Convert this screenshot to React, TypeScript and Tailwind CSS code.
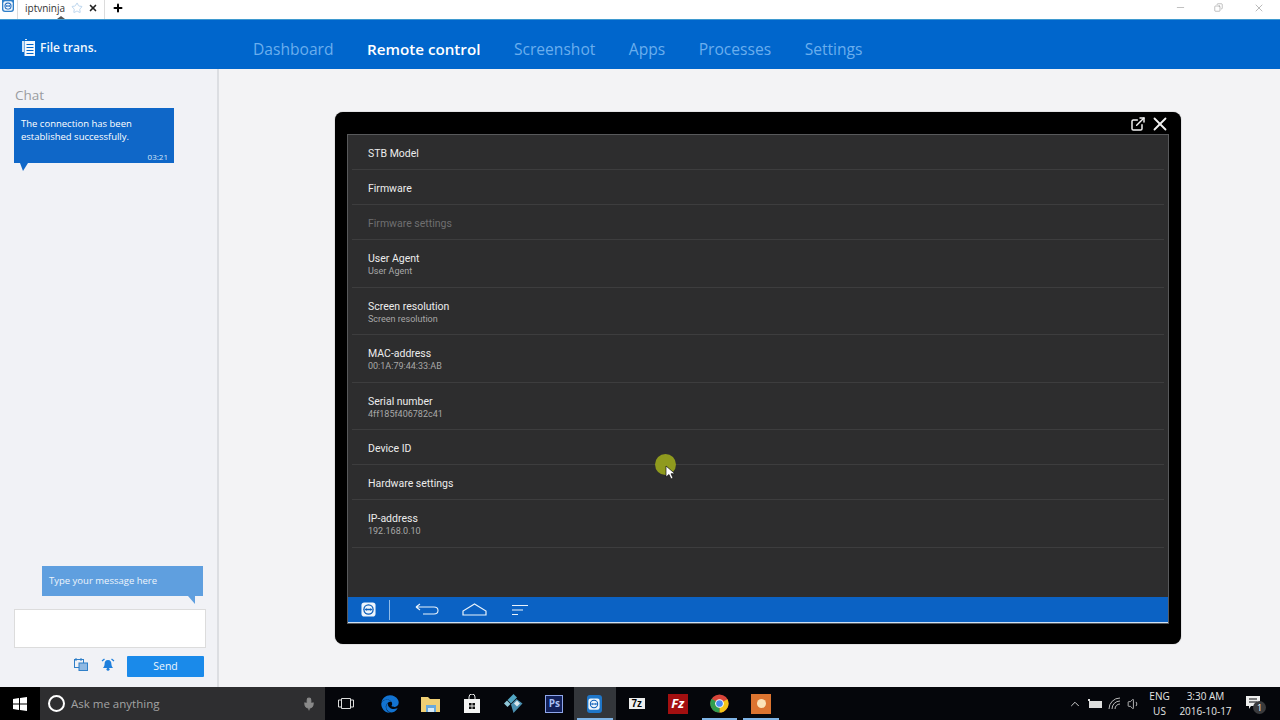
import { Mic, ChevronUp, Volume1, X, Star, Plus, Minus, Copy, ExternalLink } from "lucide-react";
import { FaEdge } from "react-icons/fa";

const navItems = ["Dashboard", "Remote control", "Screenshot", "Apps", "Processes", "Settings"];

const rows = [
  { title: "STB Model" },
  { title: "Firmware" },
  { title: "Firmware settings", disabled: true },
  { title: "User Agent", sub: "User Agent" },
  { title: "Screen resolution", sub: "Screen resolution" },
  { title: "MAC-address", sub: "00:1A:79:44:33:AB" },
  { title: "Serial number", sub: "4ff185f406782c41" },
  { title: "Device ID" },
  { title: "Hardware settings" },
  { title: "IP-address", sub: "192.168.0.10" },
];

function TvLogo({ size = 16 }: { size?: number }) {
  return (
    <svg width={size} height={size} viewBox="0 0 16 16">
      <rect x="0.5" y="0.5" width="15" height="15" rx="3" fill="#eef5fc" />
      <circle cx="8" cy="8" r="5.6" fill="#0a5cb8" />
      <circle cx="8" cy="8" r="4.2" fill="#eef5fc" />
      <path d="M3.8 8l2.2-1.7v1h4v-1L12.2 8 10 9.7v-1H6v1z" fill="#0a5cb8" />
    </svg>
  );
}

function TaskIcon({ children, active, open }: { children: React.ReactNode; active?: boolean; open?: boolean }) {
  return (
    <div className={`relative flex h-full w-[41.5px] items-center justify-center ${active ? "bg-[#33363b]" : ""}`}>
      {children}
      {(open || active) && <div className="absolute bottom-0 left-[3px] right-[3px] h-[2px] bg-[#7fb4e6]" />}
    </div>
  );
}

export default function App() {
  return (
    <div className="flex h-[720px] w-[1280px] flex-col overflow-hidden bg-white font-['Open_Sans',sans-serif]">
      {/* Tab strip */}
      <div className="flex h-[20px] shrink-0 items-center border-b border-[#3f9ad0] bg-white pb-[4px]">
        <div className="flex h-full w-[17px] items-start pl-[2px]">
          <div className="h-[12px] w-[12px] overflow-hidden rounded-b-[3px] bg-[#2f7fc8] p-[1px]">
            <TvLogo size={10} />
          </div>
        </div>
        <div className="relative -mb-[4px] flex h-[19px] w-[88px] items-center border-x border-[#dcdcdc] pb-[4px] pl-[7px]">
          <span className="w-[45px] text-[10px] leading-none text-[#333]">iptvninja</span>
          <Star size={12} className="ml-[1px] text-[#bcd6ee]" />
          <X size={10} strokeWidth={4} className="ml-[5px] text-[#222]" />
          <div className="absolute bottom-0 left-[39px] h-0 w-0 border-x-[4px] border-b-[3px] border-x-transparent border-b-[#555]" />
        </div>
        <Plus size={12} strokeWidth={4} className="ml-[7px] text-black" />
        <div className="ml-auto flex items-center text-[#777]">
          <Minus size={11} strokeWidth={1} className="mr-[28px]" />
          <Copy size={9} strokeWidth={1.2} className="mr-[30px] -scale-x-100" />
          <X size={12} strokeWidth={1} className="mr-[15px]" />
        </div>
      </div>

      {/* Header */}
      <div className="flex h-[49px] shrink-0 items-center bg-[#0066cc]">
        <div className="flex w-[253px] items-center pl-[22px] pt-[6px]">
          <svg width="14" height="17" viewBox="0 0 14 17" className="mr-[4px]">
            <path d="M0 2h2v11H0zM3 0h2v1H3z" fill="#cfe3f7" />
            <path d="M2.5 2H13v15H2.5z" fill="#f4f8fc" />
            <path d="M4.5 5h7v1h-7zM4.5 8h7v1h-7zM4.5 11h7v1h-7zM4.5 14h7v1h-7z" fill="#0066cc" />
          </svg>
          <span className="text-[12px] font-semibold text-[#f0f6fc]">File trans.</span>
        </div>
        <div className="flex gap-[33.5px] pt-[10px]">
          {navItems.map((item) => (
            <span
              key={item}
              className={
                item === "Remote control"
                  ? "text-[15.2px] font-semibold text-white"
                  : "text-[15.6px] text-[#6aaeee]"
              }
            >
              {item}
            </span>
          ))}
        </div>
      </div>

      {/* Main */}
      <div className="flex min-h-0 flex-1">
        <div className="flex w-[219px] shrink-0 flex-col border-r-2 border-[#dcdee2] bg-[#f1f2f6] pl-[14px]">
          <div className="mt-[16px] pl-[1px] text-[13.5px] leading-[20px] text-[#9a9ca0]">Chat</div>
          <div className="relative mt-[3px] flex h-[55px] w-[160px] flex-col bg-[#0f67c8] pl-[7px] pr-[6px] pt-[9px] text-white">
            <p className="text-[9.5px] leading-[13px]">
              The connection has been
              <br />
              established successfully.
            </p>
            <span className="mt-auto self-end pb-[1px] text-[8px] leading-[10px] text-[#d4e6f8]">03:21</span>
            <div className="absolute left-[6px] top-[55px] h-0 w-0 border-l-[3px] border-r-[5px] border-t-[8px] border-x-transparent border-t-[#0f67c8]" />
          </div>

          <div className="relative ml-[28px] mt-auto flex h-[30px] w-[161px] items-center bg-[#5f9fdf] pl-[7px] text-[9.5px] text-[#eef5fc]">
            Type your message here
            <div className="absolute right-[8px] top-[30px] h-0 w-0 border-l-[7px] border-t-[8px] border-l-transparent border-t-[#5f9fdf]" />
          </div>
          <div className="mt-[13px] h-[39px] w-[192px] border border-[#dcdcdc] bg-white" />
          <div className="mb-[10px] mt-[8px] flex h-[21px] items-center">
            <svg width="14" height="13" viewBox="0 0 14 13" className="ml-[60px] -mt-[4px]">
              <rect x="0.5" y="1.5" width="9" height="8" fill="none" stroke="#2f7fc8" />
              <path d="M2 0v3M7 0v3" stroke="#2f7fc8" />
              <rect x="5" y="5" width="8.5" height="7.5" fill="#8fb9e3" stroke="#2f7fc8" />
            </svg>
            <svg width="14" height="13" viewBox="0 0 14 13" className="ml-[13px] -mt-[4px]">
              <path d="M7 2c2.6 0 3.4 2 3.4 4s1 3 1.6 4H2c.6-1 1.6-2 1.6-4S4.400 2 7 2z" fill="#1f7fdc" />
              <circle cx="7" cy="11.300" r="1.500" fill="#1f7fdc" />
              <path d="M1 3l2.500-2M13 3l-2.500-2" stroke="#1f7fdc" strokeWidth="1.300" />
            </svg>
            <button className="ml-[12px] h-[21px] w-[77px] rounded-[1px] bg-[#1a8aea] text-[10.5px] text-[#eef6fd]">Send</button>
          </div>
        </div>

        <div className="relative flex-1 bg-[#f3f3f5] pl-[116px] pt-[43px]">
          {/* Device frame */}
          <div className="flex h-[532px] w-[846px] flex-col rounded-[8px] bg-black px-[12px] pb-[20px] pt-[22px] shadow-[0_0_1px_#555]">
            <div className="relative flex flex-1 flex-col border border-[#58595b] bg-[#2d2d2e] font-['Roboto',sans-serif]">
              <div className="absolute -top-[22px] -right-[3px] flex h-[22px] items-center gap-[3px] text-[#f2f2f2]">
                <ExternalLink size={16} strokeWidth={2.2} />
                <X size={22} strokeWidth={2} />
              </div>
              <div className="flex-1">
                {rows.map((row) => (
                  <div
                    key={row.title}
                    className={`ml-[4px] mr-[4px] flex flex-col justify-center border-b border-[#3d3d3e] pl-[16px] ${
                      row.sub ? "h-[47.5px] pt-[4px]" : "h-[35px] pt-[2px]"
                    }`}
                  >
                    <div className={`text-[10.5px] leading-[13px] ${row.disabled ? "text-[#6f6f70]" : "text-[#ececec]"}`}>
                      {row.title}
                    </div>
                    {row.sub && <div className="text-[9px] leading-[13px] text-[#a8a8a8]">{row.sub}</div>}
                  </div>
                ))}
              </div>
              {/* Device nav bar */}
              <div className="flex h-[25px] shrink-0 items-center bg-[#0b62c4] pl-[13px]">
                <TvLogo size={15} />
                <div className="ml-[13px] h-[20px] w-px bg-[#8fbbe8]" />
                <svg width="24" height="14" viewBox="0 0 24 14" fill="none" stroke="#eaf3fb" strokeWidth="1.100" className="ml-[25px]">
                  <path d="M1 4h18c3 0 4 1.500 4 3.500S22 11 19 11H8M1 4l4-3M1 4l4 3" />
                </svg>
                <svg width="25" height="13" viewBox="0 0 25 13" fill="none" stroke="#eaf3fb" strokeWidth="1.200" className="ml-[23px]">
                  <path d="M1 12V8L12.500 1 24 8v4z" />
                </svg>
                <svg width="18" height="12" viewBox="0 0 18 12" fill="none" stroke="#eaf3fb" strokeWidth="1.200" className="ml-[24px]">
                  <path d="M1 1.500h16M1 6h11M1 10.500h6" />
                </svg>
              </div>
              <div className="h-[1px] shrink-0 bg-[#cfe2f5]" />
            </div>
          </div>

          {/* Mouse pointer highlight */}
          <div className="absolute left-[436px] top-[385px] h-[21px] w-[21px] rounded-full bg-[#8f9a1e]" />
          <svg width="11" height="15" viewBox="0 0 11 15" className="absolute left-[446px] top-[396px]">
            <path d="M1 1v11l3-2.500 2 4.500 2-1-2-4.300h4z" fill="#fff" stroke="#111" strokeWidth="0.700" />
          </svg>
        </div>
      </div>

      {/* Taskbar */}
      <div className="flex h-[33px] shrink-0 items-center bg-[#05060b] font-['Open_Sans',sans-serif]">
        <div className="flex h-full w-[40px] items-center justify-center bg-black">
          <svg width="14" height="14" viewBox="0 0 14 14" fill="#fff">
            <path d="M0 2l6-.9v5.500H0zM7 1l7-1v6.600H7zM0 7.400h6v5.500L0 12zM7 7.400h7V14l-7-1z" />
          </svg>
        </div>
        <div className="flex h-full w-[285px] items-center bg-[#2e2e30] pl-[8px] pr-[9px]">
          <div className="h-[17px] w-[17px] rounded-full border-2 border-white" />
          <span className="ml-[6px] text-[11.5px] text-[#a3a3a3]">Ask me anything</span>
          <Mic size={14} className="ml-auto fill-[#8a8a8a] text-[#8a8a8a]" />
        </div>
        <div className="flex h-full">
          <TaskIcon>
            <svg width="16" height="13" viewBox="0 0 16 13" fill="none" stroke="#ddd" strokeWidth="1">
              <path d="M3.500 1.500h9v10h-9zM3.500 3H.5v7h3M12.500 3h3v7h-3" />
            </svg>
          </TaskIcon>
          <TaskIcon>
            <FaEdge size={18} className="ml-[5px] text-[#1273d2]" />
          </TaskIcon>
          <TaskIcon>
            <svg width="19" height="16" viewBox="0 0 19 16" className="ml-[4px]">
              <path d="M0 1h7l2 2h10v13H0z" fill="#f0cf74" />
              <path d="M5 9h10v7H5z" fill="#69a9dc" />
              <path d="M7 12h6v4H7z" fill="#d6e9f7" />
            </svg>
          </TaskIcon>
          <TaskIcon>
            <svg width="18" height="19" viewBox="0 0 18 19" className="ml-[4px]">
              <path d="M6 5V3a3 3 0 016 0v2" fill="none" stroke="#eee" strokeWidth="1" />
              <path d="M1 5h16v14H1z" fill="#f4f4f4" />
              <path d="M6 9h2.600v2.600H6zM9.400 9H12v2.600H9.400zM6 12.400h2.600V15H6zM9.400 12.400H12V15H9.400z" fill="#111" />
            </svg>
          </TaskIcon>
          <TaskIcon>
            <svg width="19" height="19" viewBox="0 0 19 19" className="ml-[4px]">
              <path d="M9.500 0l3.500 3.500-6 6-3.500-3.500z" fill="#52a7c4" />
              <path d="M3 6.500L6.500 10 3.500 13 0 9.500z" fill="#8fc7d8" />
              <path d="M7 10.500l5.500-5.500 6 4.500-9 9.500z" fill="#4a8fb0" />
              <path d="M10 9.500l3-3 3 3-3 3z" fill="#d8e6ec" />
            </svg>
          </TaskIcon>
          <TaskIcon>
            <div className="ml-[2px] flex h-[18px] w-[18px] items-center justify-center border border-[#8fa6ea] bg-[#12205a] text-[10px] font-bold text-[#a9c0f5]">
              Ps
            </div>
          </TaskIcon>
          <TaskIcon active>
            <div className="-ml-[1px] flex h-[18px] w-[15px] items-center justify-center rounded-[3px] bg-[#1f76c8]">
              <TvLogo size={12} />
            </div>
          </TaskIcon>
          <TaskIcon>
            <div className="ml-[1px] flex h-[11px] w-[16px] items-center justify-center bg-[#ededed] font-['Liberation_Sans',sans-serif] text-[10px] font-bold leading-none text-black">
              7z
            </div>
          </TaskIcon>
          <TaskIcon>
            <div className="flex h-[20px] w-[20px] items-center justify-center bg-[#a30f10] text-[13px] font-bold italic leading-none text-white">
              Fz
            </div>
          </TaskIcon>
          <TaskIcon open>
            <svg width="19" height="19" viewBox="0 0 48 48">
              <circle cx="24" cy="24" r="23" fill="#d9453a" />
              <path d="M24 24l20-11A23 23 0 0124 47z" fill="#f5c518" />
              <path d="M24 24L4 36A23 23 0 0024 47z" fill="#2f9e4f" />
              <path d="M24 24L4 36A23 23 0 014 12z" fill="#2f9e4f" />
              <circle cx="24" cy="24" r="11" fill="#fff" />
              <circle cx="24" cy="24" r="8.500" fill="#4a8bef" />
            </svg>
          </TaskIcon>
          <TaskIcon open>
            <div className="ml-[1px] flex h-[20px] w-[20px] items-center justify-center bg-[#dc7430]">
              <div className="h-[9px] w-[9px] rounded-full bg-[#fbe3b8]" />
            </div>
          </TaskIcon>
        </div>

        {/* Tray */}
        <div className="ml-auto flex h-full items-center text-[#e6e6e6]">
          <ChevronUp size={14} strokeWidth={1.500} />
          <svg width="14" height="9" viewBox="0 0 14 9" className="ml-[6px]">
            <path d="M0 0h2v2H0z" fill="#ddd" />
            <path d="M1 2h13v7H1z" fill="#ddd" />
          </svg>
          <svg width="14" height="13" viewBox="0 0 14 13" fill="none" stroke="#bbb" strokeWidth="1" className="ml-[6px]">
            <path d="M1 12a11 11 0 0111-11M4 12a8 8 0 018-8M7 12a5 5 0 015-5" />
          </svg>
          <Volume1 size={14} strokeWidth={1.300} className="ml-[5px]" />
          <div className="ml-[9px] flex w-[19px] flex-col items-center whitespace-nowrap text-[10px] leading-[15px]">
            <span>ENG</span>
            <span>US</span>
          </div>
          <div className="ml-[11px] flex w-[51px] flex-col items-center whitespace-nowrap text-[10px] leading-[15px]">
            <span>3:30 AM</span>
            <span>2016-10-17</span>
          </div>
          <div className="relative ml-[15px] mr-[18px] h-[16px] w-[16px]">
            <svg width="14" height="13" viewBox="0 0 14 13" fill="#eee">
              <path d="M0 0h14v10H5l-2 3v-3H0z" />
              <path d="M3 3h8M3 6h8" stroke="#05060b" />
            </svg>
            <div className="absolute left-[7px] top-[5px] flex h-[13px] w-[13px] items-center justify-center rounded-full bg-[#3a3a3c] text-[9px] leading-none text-white">
              1
            </div>
          </div>
        </div>
      </div>
    </div>
  );
}
